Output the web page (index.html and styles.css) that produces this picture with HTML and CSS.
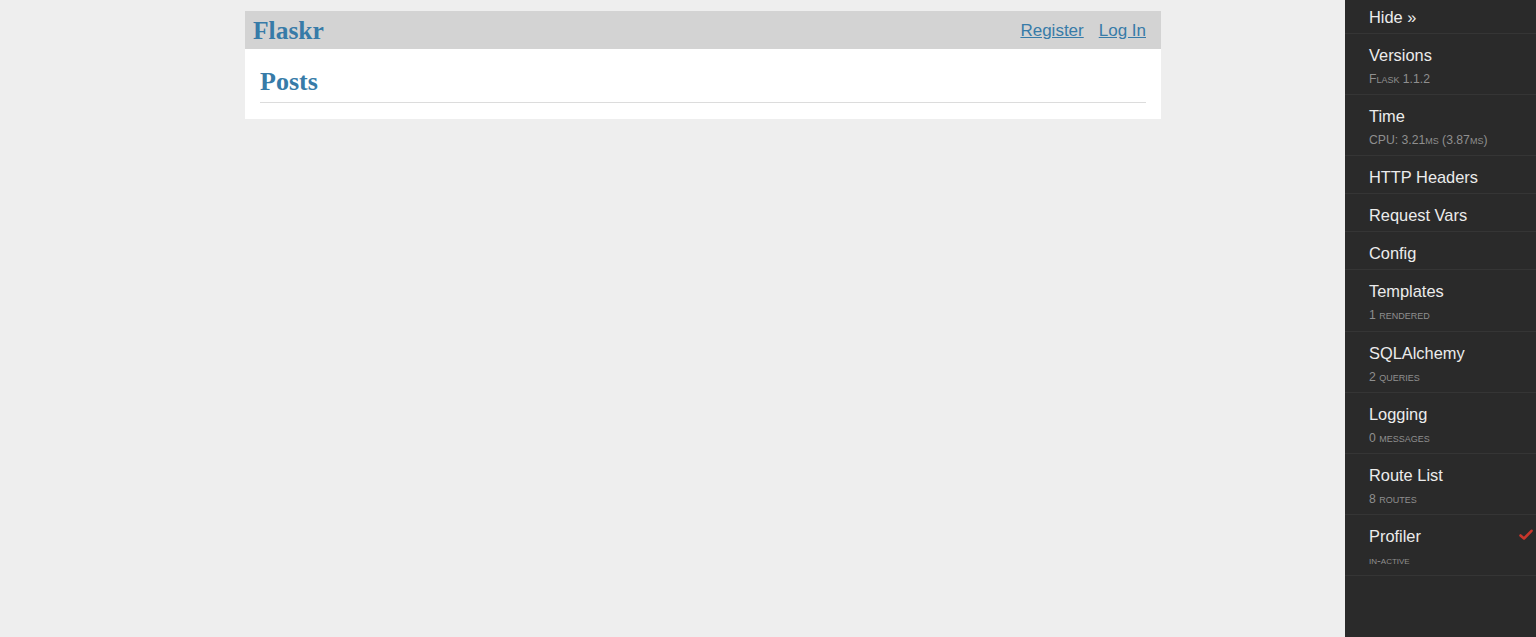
FILE: index.html
```html
<!DOCTYPE html>
<html lang="en">
<head>
    <meta charset="UTF-8">
    <title>Posts - Flaskr</title>
    <link rel="stylesheet" href="styles.css">
</head>
<body>

    <div class="page">
        <nav class="topnav">
            <h1 class="brand"><a href="#">Flaskr</a></h1>
            <ul class="nav-links">
                <li><a href="#">Register</a></li>
                <li><a href="#">Log In</a></li>
            </ul>
        </nav>
        <section class="content">
            <header class="content-header">
                <h1>Posts</h1>
            </header>
        </section>
    </div>

    <div class="debug-toolbar">
        <ul class="panel-list">
            <li class="hide-item"><a href="#">Hide &raquo;</a></li>
            <li><a href="#">Versions<br><small>Flask 1.1.2</small></a></li>
            <li><a href="#">Time<br><small>CPU: 3.21ms (3.87ms)</small></a></li>
            <li><a href="#">HTTP Headers</a></li>
            <li><a href="#">Request Vars</a></li>
            <li><a href="#">Config</a></li>
            <li><a href="#">Templates<br><small>1 rendered</small></a></li>
            <li><a href="#">SQLAlchemy<br><small>2 queries</small></a></li>
            <li><a href="#">Logging<br><small>0 messages</small></a></li>
            <li><a href="#">Route List<br><small>8 routes</small></a></li>
            <li>
                <a href="#">Profiler<br><small class="tiny">in-active</small></a>
                <svg class="tick" width="14" height="12" viewBox="0 0 14 12" xmlns="http://www.w3.org/2000/svg">
                    <path d="M1.5 6.5 L5 9.5 L12.5 1.8" fill="none" stroke="#c9362c" stroke-width="2.6" stroke-linecap="round" stroke-linejoin="round"/>
                </svg>
            </li>
        </ul>
    </div>

</body>
</html>
```

FILE: styles.css
```css
html {
    background: #eeeeee;
}
body {
    margin: 0;
    font-family: "Liberation Sans", Arial, sans-serif;
}
.page {
    width: 916px;
    margin: 11px 0 0 245px;
    background: #ffffff;
}
a {
    color: #377ba8;
}
.topnav {
    background: #d3d3d3;
    display: flex;
    align-items: center;
    padding: 0 7.5px 0 0;
    height: 38px;
}
.brand {
    flex: auto;
    margin: 0;
    font-family: "Liberation Serif", "Times New Roman", serif;
    font-size: 25.5px;
    line-height: 30px;
    padding-top: 1px;
}
.brand a {
    text-decoration: none;
    padding: 0 0 0 8px;
}
.nav-links {
    display: flex;
    list-style: none;
    margin: 0;
    padding: 0;
}
.nav-links a {
    display: block;
    padding: 7.5px;
    font-size: 17px;
    line-height: 23px;
}
.content {
    padding: 0 15px 16px;
}
.content-header {
    border-bottom: 1px solid #dcdcdc;
}
.content-header h1 {
    margin: 16px 0 3px 0;
    font-family: "Liberation Serif", "Times New Roman", serif;
    font-size: 26px;
    line-height: 34px;
    color: #377ba8;
}

/* debug toolbar */
.debug-toolbar {
    position: fixed;
    top: 0;
    right: 0;
    bottom: 0;
    width: 191px;
    background: #2a2a2a;
}
.panel-list {
    list-style: none;
    margin: 0;
    padding: 0;
}
.panel-list li {
    position: relative;
    border-bottom: 1px solid #353535;
}
.panel-list li > a {
    display: block;
    padding: 10px 10px 5px 24px;
    color: #ececec;
    text-decoration: none;
    font-size: 16.4px;
    line-height: 22px;
}
.panel-list .hide-item > a {
    padding-top: 6px;
}
.panel-list small {
    font-size: 12.2px;
    color: #8f8f8f;
    font-variant: small-caps;
    display: inline-block;
    line-height: 20.2px;
    vertical-align: top;
    padding-top: 3px;
}
.panel-list small.tiny {
    font-size: 11.4px;
    padding-top: 4px;
    line-height: 19.2px;
}
.panel-list li .tick {
    position: absolute;
    top: 14px;
    right: 3px;
}
```
